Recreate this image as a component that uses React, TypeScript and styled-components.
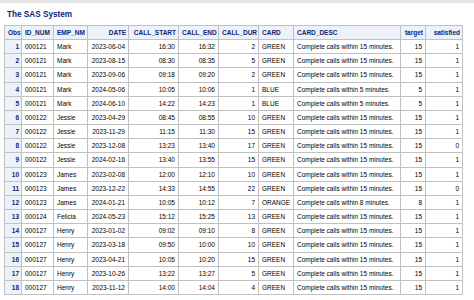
import React from "react";
import styled, { createGlobalStyle } from "styled-components";

const Global = createGlobalStyle`
  html, body { margin: 0; padding: 0; background: #ffffff; }
  body { font-family: "Liberation Sans", Arial, sans-serif; }
`;

const Page = styled.div`
  width: 474px;
  height: 300px;
  overflow: hidden;
  background: #ffffff;
  display: flex;
  flex-direction: column;
`;

const TopBand = styled.div`
  height: 3px;
  background: #e4e4e4;
  flex: none;
`;

const Title = styled.div`
  height: 22px;
  display: flex;
  align-items: center;
  padding-left: 7px;
  font-size: 8.2px;
  font-weight: bold;
  color: #112277;
  flex: none;
`;

const Table = styled.table`
  margin-left: 4px;
  border-collapse: collapse;
  table-layout: fixed;
  width: 458px;
  font-size: 6.5px;
  color: #000000;
`;

const HeadCell = styled.th<{ $align?: "left" | "right" }>`
  background: #edf2f9;
  color: #112277;
  font-weight: bold;
  border: 1px solid #c1c1c1;
  text-align: ${(p) => p.$align ?? "left"};
  padding: 0 2px 0 3px;
  height: 13px;
  white-space: nowrap;
  overflow: hidden;
`;

const ObsCell = styled.th`
  background: #edf2f9;
  color: #112277;
  font-weight: bold;
  border: 1px solid #c1c1c1;
  text-align: right;
  padding: 0 2px 0 0;
  white-space: nowrap;
`;

const Cell = styled.td<{ $align?: "left" | "right" }>`
  border: 1px solid #c1c1c1;
  text-align: ${(p) => p.$align ?? "left"};
  padding: ${(p) => (p.$align === "right" ? "0 3px 0 2px" : "0 2px 0 3px")};
  white-space: nowrap;
  overflow: hidden;
`;

const Row = styled.tr`
  height: 14.18px;
`;

const HeadRow = styled.tr`
  height: 14px;
`;

type Rec = [string, string, string, string, string, number, string, string, number, number];

const G15 = "Complete calls within 15 minutes.";
const B5 = "Complete calls within 5 minutes.";

const rows: Rec[] = [
  ["000121", "Mark", "2023-06-04", "16:30", "16:32", 2, "GREEN", G15, 15, 1],
  ["000121", "Mark", "2023-08-15", "08:30", "08:35", 5, "GREEN", G15, 15, 1],
  ["000121", "Mark", "2023-09-06", "09:18", "09:20", 2, "GREEN", G15, 15, 1],
  ["000121", "Mark", "2024-05-06", "10:05", "10:06", 1, "BLUE", B5, 5, 1],
  ["000121", "Mark", "2024-06-10", "14:22", "14:23", 1, "BLUE", B5, 5, 1],
  ["000122", "Jessie", "2023-04-29", "08:45", "08:55", 10, "GREEN", G15, 15, 1],
  ["000122", "Jessie", "2023-11-29", "11:15", "11:30", 15, "GREEN", G15, 15, 1],
  ["000122", "Jessie", "2023-12-08", "13:23", "13:40", 17, "GREEN", G15, 15, 0],
  ["000122", "Jessie", "2024-02-16", "13:40", "13:55", 15, "GREEN", G15, 15, 1],
  ["000123", "James", "2023-02-08", "12:00", "12:10", 10, "GREEN", G15, 15, 1],
  ["000123", "James", "2023-12-22", "14:33", "14:55", 22, "GREEN", G15, 15, 0],
  ["000123", "James", "2024-01-21", "10:05", "10:12", 7, "ORANGE", "Complete calls within 8 minutes.", 8, 1],
  ["000124", "Felicia", "2024-05-23", "15:12", "15:25", 13, "GREEN", G15, 15, 1],
  ["000127", "Henry", "2023-01-02", "09:02", "09:10", 8, "GREEN", G15, 15, 1],
  ["000127", "Henry", "2023-03-18", "09:50", "10:00", 10, "GREEN", G15, 15, 1],
  ["000127", "Henry", "2023-04-21", "10:05", "10:20", 15, "GREEN", G15, 15, 1],
  ["000127", "Henry", "2023-10-26", "13:22", "13:27", 5, "GREEN", G15, 15, 1],
  ["000127", "Henry", "2023-11-12", "14:00", "14:04", 4, "GREEN", G15, 15, 1],
];

const widths = [17, 32, 34, 41, 50, 40, 40, 35, 107, 25, 37];

export default function App() {
  return (
    <Page>
      <Global />
      <TopBand />
      <Title>The SAS System</Title>
      <Table>
        <colgroup>
          {widths.map((w, i) => (
            <col key={i} style={{ width: w }} />
          ))}
        </colgroup>
        <thead>
          <HeadRow>
            <HeadCell $align="right">Obs</HeadCell>
            <HeadCell>ID_NUM</HeadCell>
            <HeadCell>EMP_NM</HeadCell>
            <HeadCell $align="right">DATE</HeadCell>
            <HeadCell $align="right">CALL_START</HeadCell>
            <HeadCell $align="right">CALL_END</HeadCell>
            <HeadCell $align="right">CALL_DUR</HeadCell>
            <HeadCell>CARD</HeadCell>
            <HeadCell>CARD_DESC</HeadCell>
            <HeadCell $align="right">target</HeadCell>
            <HeadCell $align="right">satisfied</HeadCell>
          </HeadRow>
        </thead>
        <tbody>
          {rows.map((r, i) => (
            <Row key={i}>
              <ObsCell>{i + 1}</ObsCell>
              <Cell>{r[0]}</Cell>
              <Cell>{r[1]}</Cell>
              <Cell $align="right">{r[2]}</Cell>
              <Cell $align="right">{r[3]}</Cell>
              <Cell $align="right">{r[4]}</Cell>
              <Cell $align="right">{r[5]}</Cell>
              <Cell>{r[6]}</Cell>
              <Cell>{r[7]}</Cell>
              <Cell $align="right">{r[8]}</Cell>
              <Cell $align="right">{r[9]}</Cell>
            </Row>
          ))}
        </tbody>
      </Table>
    </Page>
  );
}
